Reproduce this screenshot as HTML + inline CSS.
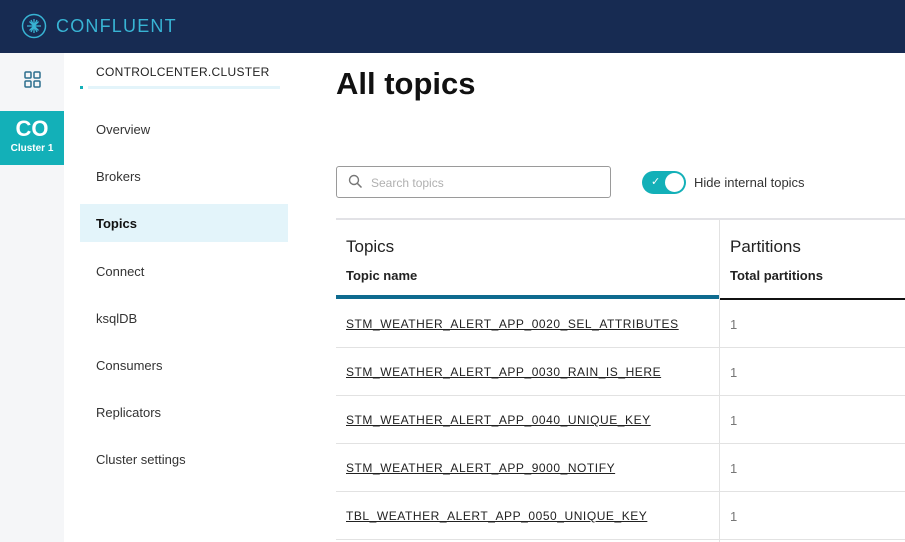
<!DOCTYPE html>
<html><head><style>
*{margin:0;padding:0;box-sizing:border-box}
body{width:905px;height:542px;overflow:hidden;background:#fff;font-family:"Liberation Sans",sans-serif;position:relative;color:#222}
.hdr{position:absolute;left:0;top:0;width:905px;height:53px;background:#172b52}
.logo{position:absolute;left:56px;top:16px;color:#38b4d4;font-size:18px;letter-spacing:1.2px}
.rail{position:absolute;left:0;top:53px;width:64px;height:489px;background:#f5f6f8}
.co{position:absolute;left:0;top:111px;width:64px;height:54px;background:#13b0b8;color:#fff;text-align:center}
.side{position:absolute;left:64px;top:53px;width:240px;height:489px;background:#fff}
.nav{position:absolute;left:96px;font-size:13px;color:#333}
.a{position:absolute;font-size:12px;color:#222;text-decoration:underline;left:346px;letter-spacing:.55px}
.n{position:absolute;left:730px;font-size:13px;color:#777}
.hl{position:absolute;left:336px;width:569px;height:1px;background:#e2e2e2}
</style></head><body>
<div class="hdr">
<svg style="position:absolute;left:21px;top:13px" width="26" height="26" viewBox="0 0 26 26"><circle cx="13" cy="13" r="11.5" fill="none" stroke="#38b4d4" stroke-width="1.5"/><g stroke="#38b4d4" stroke-width="1.3"><path d="M13 6V20M6 13H20M8.5 8.5L17.5 17.5M17.5 8.5L8.5 17.5M10 7L16 19M16 7L10 19"/></g></svg>
<div class="logo">CONFLUENT</div></div>
<div class="rail"></div>
<svg style="position:absolute;left:24px;top:71px" width="17" height="17" viewBox="0 0 17 17"><g fill="none" stroke="#2c6e8e" stroke-width="1.5"><rect x="1" y="1" width="6" height="6" rx="1"/><rect x="10" y="1" width="6" height="6" rx="1"/><rect x="1" y="10" width="6" height="6" rx="1"/><rect x="10" y="10" width="6" height="6" rx="1"/></g></svg>
<div class="co"><div style="font-size:22px;font-weight:bold;margin-top:6px;line-height:24px">CO</div><div style="font-size:10px;font-weight:bold;margin-top:2px">Cluster 1</div></div>
<div class="side"></div>
<div style="position:absolute;left:96px;top:65px;font-size:12px;letter-spacing:.3px;color:#222">CONTROLCENTER.CLUSTER</div>
<div style="position:absolute;left:80px;top:86px;width:3px;height:3px;background:#13b0b8"></div>
<div style="position:absolute;left:88px;top:86px;width:192px;height:3px;background:#e3f4fa"></div>
<div style="position:absolute;left:80px;top:204px;width:208px;height:38px;background:#e3f4fa"></div>
<div class="nav" style="top:122px">Overview</div>
<div class="nav" style="top:169px">Brokers</div>
<div class="nav" style="top:216px;color:#111;font-weight:bold">Topics</div>
<div class="nav" style="top:264px">Connect</div>
<div class="nav" style="top:311px">ksqlDB</div>
<div class="nav" style="top:358px">Consumers</div>
<div class="nav" style="top:405px">Replicators</div>
<div class="nav" style="top:452px">Cluster settings</div>
<div style="position:absolute;left:336px;top:66px;font-size:31px;font-weight:bold;color:#111">All topics</div>
<div style="position:absolute;left:336px;top:166px;width:275px;height:32px;border:1px solid #9a9a9a;border-radius:3px"></div>
<svg style="position:absolute;left:348px;top:174px" width="15" height="15" viewBox="0 0 15 15"><circle cx="6" cy="6" r="4.5" fill="none" stroke="#777" stroke-width="1.4"/><path d="M9.3 9.3L13.5 13.5" stroke="#777" stroke-width="1.5"/></svg>
<div style="position:absolute;left:371px;top:176px;font-size:12px;color:#b0b0b0">Search topics</div>
<div style="position:absolute;left:642px;top:171px;width:44px;height:23px;border-radius:12px;background:#13b0b8"></div>
<div style="position:absolute;left:665px;top:173px;width:19px;height:19px;border-radius:50%;background:#fff"></div>
<div style="position:absolute;left:651px;top:175px;font-size:11px;color:#fff">✓</div>
<div style="position:absolute;left:694px;top:175px;font-size:13px;color:#333">Hide internal topics</div>
<div style="position:absolute;left:336px;top:218px;width:569px;height:2px;background:#e2e2e6"></div>
<div style="position:absolute;left:719px;top:220px;width:1px;height:322px;background:#e2e2e2"></div>
<div style="position:absolute;left:346px;top:237px;font-size:17px;color:#222">Topics</div>
<div style="position:absolute;left:346px;top:268px;font-size:13px;font-weight:bold;color:#222">Topic name</div>
<div style="position:absolute;left:730px;top:237px;font-size:17px;color:#222">Partitions</div>
<div style="position:absolute;left:730px;top:268px;font-size:13px;font-weight:bold;color:#222">Total partitions</div>
<div style="position:absolute;left:336px;top:295px;width:383px;height:4px;background:#0e6b8f"></div>
<div style="position:absolute;left:720px;top:298px;width:185px;height:2px;background:#111"></div>
<div class="a" style="top:317px">STM_WEATHER_ALERT_APP_0020_SEL_ATTRIBUTES</div><div class="n" style="top:317px">1</div>
<div class="hl" style="top:347px"></div>
<div class="a" style="top:365px">STM_WEATHER_ALERT_APP_0030_RAIN_IS_HERE</div><div class="n" style="top:365px">1</div>
<div class="hl" style="top:395px"></div>
<div class="a" style="top:413px">STM_WEATHER_ALERT_APP_0040_UNIQUE_KEY</div><div class="n" style="top:413px">1</div>
<div class="hl" style="top:443px"></div>
<div class="a" style="top:461px">STM_WEATHER_ALERT_APP_9000_NOTIFY</div><div class="n" style="top:461px">1</div>
<div class="hl" style="top:491px"></div>
<div class="a" style="top:509px">TBL_WEATHER_ALERT_APP_0050_UNIQUE_KEY</div><div class="n" style="top:509px">1</div>
<div class="hl" style="top:539px"></div>
</body></html>
